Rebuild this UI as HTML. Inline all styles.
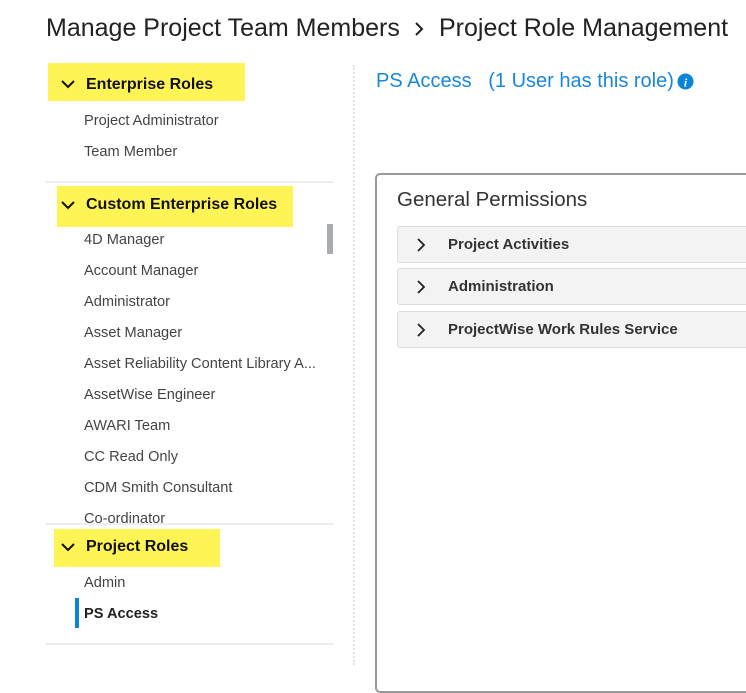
<!DOCTYPE html>
<html><head><style>
*{margin:0;padding:0;box-sizing:border-box}
body{width:746px;height:662px;background:#fff;font-family:"Liberation Sans","DejaVu Sans",sans-serif;color:#333;position:relative;overflow:hidden}
.a{position:absolute;white-space:nowrap}
.t{font-size:25px;color:#222;top:14px}
.y{position:absolute;background:#fff455}
.h{font-size:16px;font-weight:bold;color:#111;line-height:20px}
.i{font-size:14.6px;color:#444;left:84px;line-height:18px}
.d{position:absolute;left:45px;width:288px;height:2px;background:#eee}
.row{position:absolute;left:397px;width:360px;background:#f3f3f3;border:1px solid #ddd;border-radius:3px}
.row span{position:absolute;left:50px;top:9px;font-size:15px;font-weight:bold;color:#333}
.row svg{position:absolute;left:18px;top:11px}
</style></head><body>
<div class="a t" style="left:46px">Manage Project Team Members</div>
<svg class="a" style="left:413px;top:21px" width="12" height="16"><path d="M3 2l6 6-6 6" fill="none" stroke="#222" stroke-width="2"/></svg>
<div class="a t" style="left:439px">Project Role Management</div>

<div class="y" style="left:48px;top:63px;width:197px;height:38px"></div>
<svg class="a" style="left:61px;top:79px" width="14" height="10"><path d="M1 2l6 6 6-6" fill="none" stroke="#111" stroke-width="2"/></svg>
<div class="a h" style="left:86px;top:75px">Enterprise Roles</div>
<div class="a i" style="top:112px">Project Administrator</div>
<div class="a i" style="top:143px">Team Member</div>
<div class="d" style="top:181px"></div>

<div class="y" style="left:57px;top:186px;width:236px;height:41px"></div>
<svg class="a" style="left:61px;top:200px" width="14" height="10"><path d="M1 2l6 6 6-6" fill="none" stroke="#111" stroke-width="2"/></svg>
<div class="a h" style="left:86px;top:195px">Custom Enterprise Roles</div>
<div class="a" style="left:327px;top:224px;width:6px;height:30px;background:#a8abb0"></div>
<div class="a i" style="top:231px">4D Manager</div>
<div class="a i" style="top:262px">Account Manager</div>
<div class="a i" style="top:293px">Administrator</div>
<div class="a i" style="top:324px">Asset Manager</div>
<div class="a i" style="top:355px">Asset Reliability Content Library A...</div>
<div class="a i" style="top:386px">AssetWise Engineer</div>
<div class="a i" style="top:417px">AWARI Team</div>
<div class="a i" style="top:448px">CC Read Only</div>
<div class="a i" style="top:479px">CDM Smith Consultant</div>
<div class="a i" style="top:510px">Co-ordinator</div>
<div class="d" style="top:523px"></div>

<div class="y" style="left:54px;top:529px;width:166px;height:38px"></div>
<svg class="a" style="left:61px;top:542px" width="14" height="10"><path d="M1 2l6 6 6-6" fill="none" stroke="#111" stroke-width="2"/></svg>
<div class="a h" style="left:86px;top:537px">Project Roles</div>
<div class="a i" style="top:574px">Admin</div>
<div class="a" style="left:75px;top:598px;width:4px;height:30px;background:#0a84d6"></div>
<div class="a i" style="top:605px;font-weight:bold;color:#222">PS Access</div>
<div class="d" style="top:643px"></div>

<div class="a" style="left:353px;top:65px;height:600px;border-left:2px dotted #e2e2e2"></div>

<div class="a" style="left:376px;top:70px;font-size:20px;color:#1a87d8">PS Access&nbsp;&nbsp;&nbsp;(1 User has this role)</div>
<svg class="a" style="left:677px;top:73px" width="17" height="17"><circle cx="8.5" cy="8.5" r="8" fill="#0a84d6"/><text x="8.5" y="13.5" font-size="12" font-weight="bold" font-style="italic" fill="#fff" text-anchor="middle" font-family="Liberation Serif,serif">i</text></svg>

<div class="a" style="left:375px;top:173px;width:400px;height:520px;border:2px solid #999;border-radius:5px"></div>
<div class="a" style="left:397px;top:188px;font-size:20.5px;color:#333">General Permissions</div>
<div class="row" style="top:226px;height:37px"><svg width="10" height="14"><path d="M2 1l6 6-6 6" fill="none" stroke="#222" stroke-width="1.8"/></svg><span>Project Activities</span></div>
<div class="row" style="top:268px;height:37px"><svg width="10" height="14"><path d="M2 1l6 6-6 6" fill="none" stroke="#222" stroke-width="1.8"/></svg><span>Administration</span></div>
<div class="row" style="top:311px;height:37px"><svg width="10" height="14"><path d="M2 1l6 6-6 6" fill="none" stroke="#222" stroke-width="1.8"/></svg><span>ProjectWise Work Rules Service</span></div>
</body></html>
